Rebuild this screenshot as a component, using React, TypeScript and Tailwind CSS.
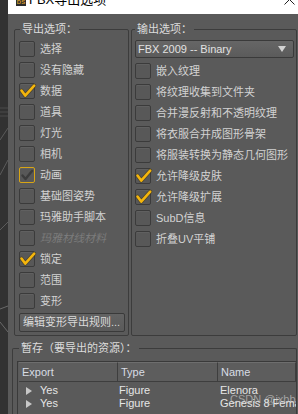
import React from "react";

type S = "off" | "on" | "partial";

function Box({ s }: { s: S }) {
  return (
    <div
      className={`relative w-[16px] h-[16px] shrink-0 rounded-[2px] border ${
        s === "partial" ? "border-[#d8a515]" : "border-[#3b3b3b]"
      } bg-[#585858] shadow-[inset_0_1px_0_rgba(255,255,255,0.05)]`}
    >
      {s === "on" && (
        <svg className="absolute left-[-1px] top-[-1px] overflow-visible" width="16" height="16" viewBox="0 0 16 16">
          <path d="M2.5 7.5 L6.2 12.6 L15.2 2.6" fill="none" stroke="#3a2c00" strokeWidth="4" strokeLinecap="round" strokeLinejoin="round" opacity="0.45" />
          <path d="M2.5 7.5 L6.2 12.6 L15.2 2.6" fill="none" stroke="#f4b50c" strokeWidth="2.6" strokeLinecap="round" strokeLinejoin="round" />
        </svg>
      )}
      {s === "partial" && (
        <svg className="absolute left-[-1px] top-[-1px] overflow-visible" width="16" height="16" viewBox="0 0 16 16">
          <path d="M3.5 8.5 L6.5 12 L13 4" fill="none" stroke="#3c3c3c" strokeWidth="2.4" strokeLinecap="round" strokeLinejoin="round" />
        </svg>
      )}
    </div>
  );
}

function Row({ label, s = "off", disabled = false }: { label: string; s?: S; disabled?: boolean }) {
  return (
    <div className="flex items-center gap-[5px] h-[16px]">
      <Box s={s} />
      <span
        className={`text-[11px] leading-[16px] whitespace-nowrap ${
          disabled ? "italic text-[#7c7c7c]" : "text-[#d2d2d2]"
        }`}
      >
        {label}
      </span>
    </div>
  );
}

function Legend({ text, left }: { text: string; left: string }) {
  return (
    <span
      className={`absolute ${left} top-[-7px] px-[2px] bg-[#5a5a5a] text-[11px] leading-[12px] text-[#dcdcdc] whitespace-nowrap`}
    >
      {text}
    </span>
  );
}

const leftRows: { label: string; s?: S; disabled?: boolean }[] = [
  { label: "选择" },
  { label: "没有隐藏" },
  { label: "数据", s: "on" },
  { label: "道具" },
  { label: "灯光" },
  { label: "相机" },
  { label: "动画", s: "partial" },
  { label: "基础图姿势" },
  { label: "玛雅助手脚本" },
  { label: "玛雅材线材料", disabled: true },
  { label: "锁定", s: "on" },
  { label: "范围" },
  { label: "变形" },
];

const rightRows: { label: string; s?: S }[] = [
  { label: "嵌入纹理" },
  { label: "将纹理收集到文件夹" },
  { label: "合并漫反射和不透明纹理" },
  { label: "将衣服合并成图形骨架" },
  { label: "将服装转换为静态几何图形" },
  { label: "允许降级皮肤", s: "on" },
  { label: "允许降级扩展", s: "on" },
  { label: "SubD信息" },
  { label: "折叠UV平铺" },
];

export default function App() {
  return (
    <div className="relative w-[298px] h-[414px] flex overflow-hidden bg-[#5a5a5a] font-['Liberation_Sans','Noto_Sans_CJK_SC',sans-serif]">
      {/* background strip */}
      <div className="w-[8px] h-full shrink-0 bg-[#323232]">
        <svg width="8" height="414" viewBox="0 0 8 414">
          <path d="M0 108 H8 M0 112 H8 M0 116 H8" stroke="#4a4a4a" strokeWidth="1" />
          <path d="M0 140 L8 128 M0 175 L8 160 M0 230 L8 222" stroke="#5c5c5c" strokeWidth="1" />
          <path d="M0 309 L8 306 M0 322 L8 332" stroke="#6a6a6a" strokeWidth="1" />
        </svg>
      </div>

      <div className="flex-1 min-w-0 flex flex-col">
        {/* title bar */}
        <div className="h-[14px] shrink-0 bg-white flex items-start overflow-hidden">
          <div className="ml-[8px] -mt-[7px] w-[10px] h-[13px] bg-[#2b2b2b] flex items-end justify-center">
            <span className="text-[6px] leading-[7px] font-bold text-[#d49a2a]">DS</span>
          </div>
          <span className="ml-[3px] -mt-[7px] text-[13px] leading-[13px] text-black whitespace-nowrap">FBX导出选项</span>
          <div className="flex-1" />
          <svg className="-mt-[6px] mr-[3px]" width="11" height="11" viewBox="0 0 11 11">
            <path d="M0.5 0.5 L10.5 10.5 M10.5 0.5 L0.5 10.5" stroke="#222" strokeWidth="1" />
          </svg>
        </div>

        {/* body */}
        <div className="flex-1 flex flex-col pt-[15px]">
          <div className="flex pl-[6px] gap-[2px]">
            {/* left group */}
            <div className="relative w-[115px] h-[307px] border border-[#3c3c3c] rounded-[2px] pl-[4px] pt-[11px]">
              <Legend text="导出选项：" left="left-[5px]" />
              <div className="flex flex-col gap-[5px]">
                {leftRows.map((r) => (
                  <Row key={r.label} label={r.label} s={r.s} disabled={r.disabled} />
                ))}
              </div>
              <div className="mt-[4px] w-[106px] h-[19px] rounded-[2px] border border-[#3a3a3a] bg-linear-to-b from-[#636363] to-[#5a5a5a] flex items-center pl-[3px] text-[11px] leading-[17px] text-[#dadada] whitespace-nowrap">
                编辑变形导出规则...
              </div>
            </div>

            {/* right group */}
            <div className="relative w-[166px] h-[307px] border border-[#3c3c3c] rounded-[2px] pl-[3px] pr-[2px] pt-[10px]">
              <Legend text="输出选项：" left="left-[3px]" />
              <div className="h-[18px] flex items-center justify-between pl-[2px] pr-[7px] rounded-[2px] border border-[#3a3a3a] bg-linear-to-b from-[#666666] to-[#5b5b5b] text-[11px] leading-[16px] text-[#e2e2e2]">
                <span>FBX 2009 -- Binary</span>
                <svg width="8" height="6" viewBox="0 0 8 6">
                  <path d="M0 0 H8 L4 6 Z" fill="#d2d2d2" />
                </svg>
              </div>
              <div className="mt-[5px] flex flex-col gap-[5px]">
                {rightRows.map((r) => (
                  <Row key={r.label} label={r.label} s={r.s} />
                ))}
              </div>
            </div>
          </div>

          {/* bottom group */}
          <div className="relative mt-[12px] ml-[4px] w-[285px] flex-1 border border-[#3c3c3c] border-b-0 rounded-t-[2px] pl-[4px] pt-[12px]">
            <Legend text="暂存（要导出的资源）：" left="left-[6px]" />
            <div className="h-full border border-[#3a3a3a] border-r-0 border-b-0 pl-[1px] pt-0 flex flex-col">
              <div className="flex h-[20px] text-[11px] leading-[18px] text-[#d8dce4]">
                <div className="w-[99px] shrink-0 bg-[#5d5d5d] border-t border-t-[#6e6e6e] border-b border-b-[#3e3e3e] border-r border-r-[#3e3e3e] pl-[3px]">Export</div>
                <div className="w-[100px] shrink-0 bg-[#5d5d5d] border-t border-t-[#6e6e6e] border-b border-b-[#3e3e3e] border-r border-r-[#3e3e3e] pl-[3px]">Type</div>
                <div className="flex-1 min-w-0 bg-[#5d5d5d] border-t border-t-[#6e6e6e] border-b border-b-[#3e3e3e] border-r border-r-[#3e3e3e] pl-[3px]">Name</div>
              </div>
              <div className="mt-[2px] flex flex-col text-[11px] leading-[13px] text-[#e6e6e6]">
                {[
                  ["Yes", "Figure", "Elenora"],
                  ["Yes", "Figure", "Genesis 8 Female"],
                ].map((r, i) => (
                  <div key={i} className="flex h-[13px]">
                    <div className="w-[99px] shrink-0 flex items-center pl-[7px]">
                      <svg width="6" height="8" viewBox="0 0 6 8">
                        <path d="M0 0 L6 4 L0 8 Z" fill="#c8c8c8" />
                      </svg>
                      <span className="ml-[8px]">{r[0]}</span>
                    </div>
                    <div className="w-[100px] shrink-0 pl-[1px] whitespace-nowrap overflow-hidden">{r[1]}</div>
                    <div className="flex-1 min-w-0 pl-[2px] whitespace-nowrap overflow-hidden">{r[2]}</div>
                  </div>
                ))}
              </div>
            </div>
          </div>
        </div>
      </div>

      <span className="absolute left-[230px] top-[393px] text-[11px] leading-[13px] text-[rgba(215,215,215,0.6)] whitespace-nowrap">
        CSDN @jxbb
      </span>
    </div>
  );
}
